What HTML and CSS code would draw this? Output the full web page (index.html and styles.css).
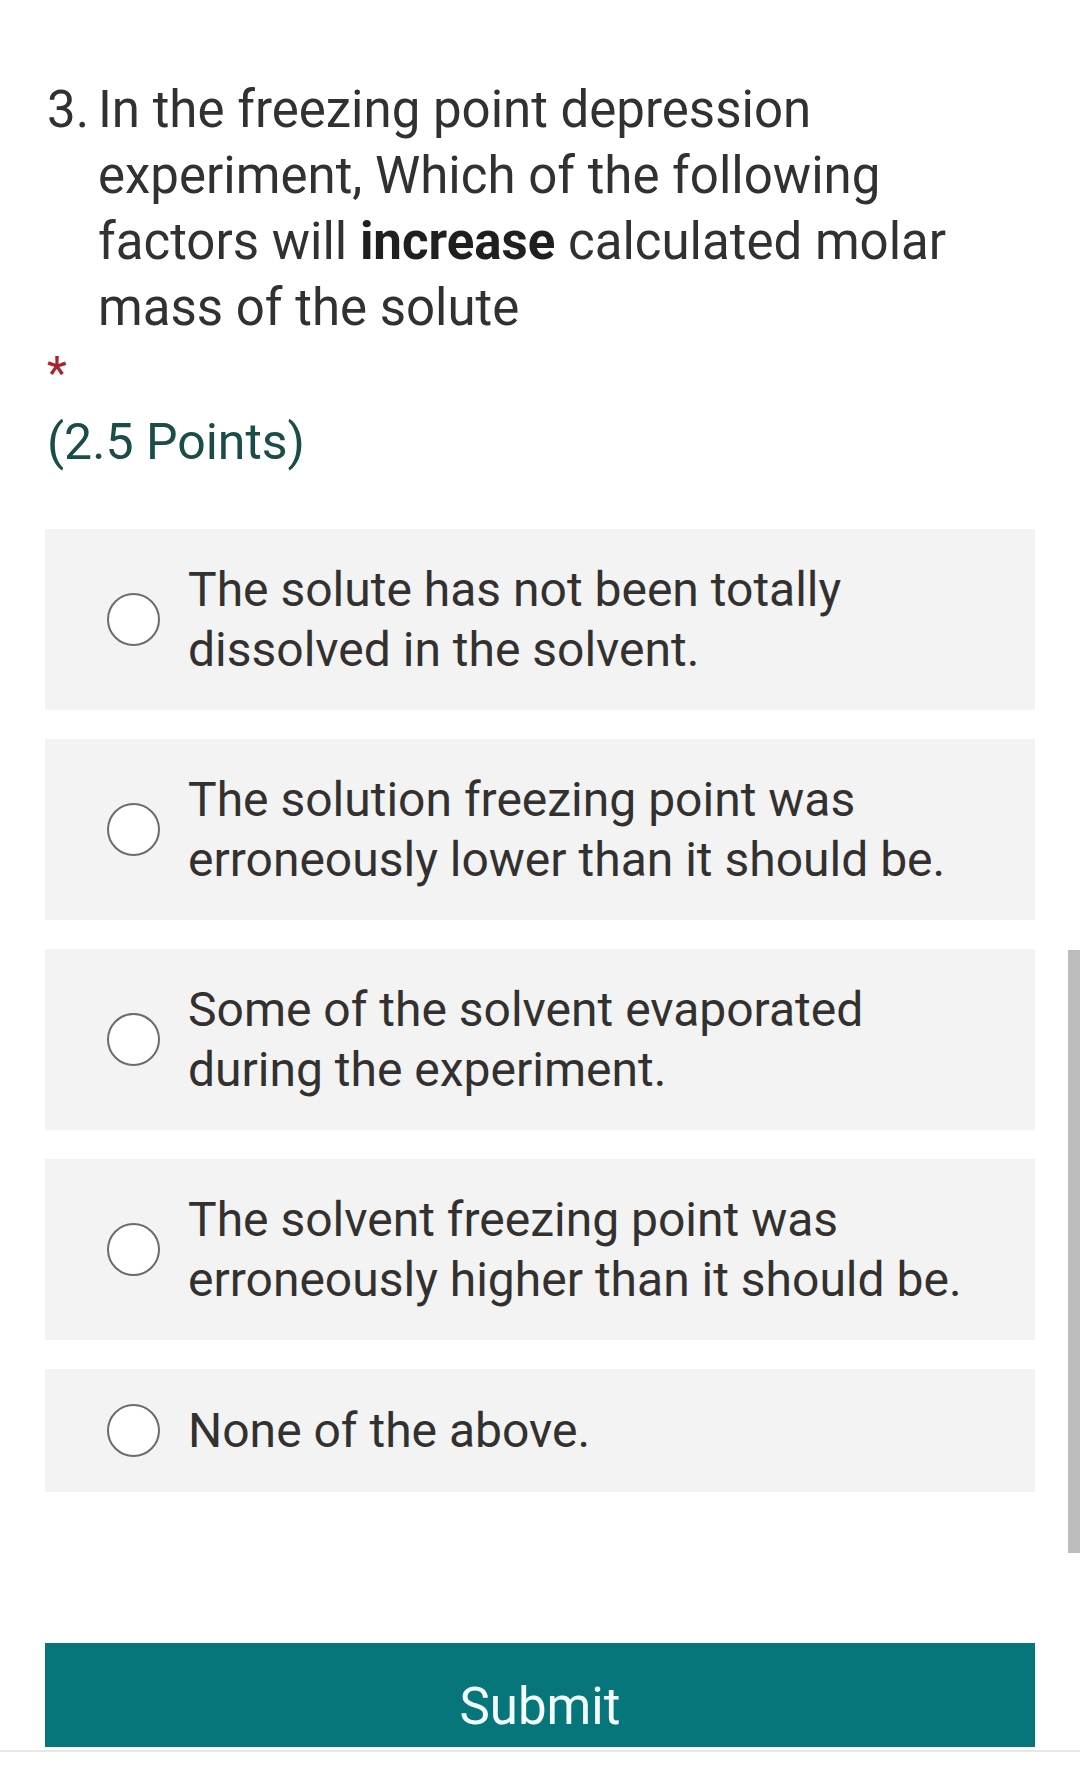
FILE: index.html
```html
<!DOCTYPE html>
<html lang="en">
<head>
<meta charset="utf-8">
<title>Question 3</title>
<link rel="stylesheet" href="styles.css">
</head>
<body>
<main class="page">
  <section class="question">
    <div class="q-title">
      <span class="q-num">3.</span>
      <span class="q-text">In the freezing point depression experiment, Which of the following factors will <b>increase</b> calculated molar mass of the solute</span>
    </div>
    <div class="required">*</div>
    <div class="points">(2.5 Points)</div>
  </section>

  <ul class="options">
    <li class="option"><span class="radio"></span><span class="opt-text">The solute has not been totally dissolved in the solvent.</span></li>
    <li class="option"><span class="radio"></span><span class="opt-text">The solution freezing point was erroneously lower than it should be.</span></li>
    <li class="option"><span class="radio"></span><span class="opt-text">Some of the solvent evaporated during the experiment.</span></li>
    <li class="option"><span class="radio"></span><span class="opt-text">The solvent freezing point was erroneously higher than it should be.</span></li>
    <li class="option"><span class="radio"></span><span class="opt-text">None of the above.</span></li>
  </ul>

  <button class="submit" type="button">Submit</button>
  <div class="bottom-bar"></div>
  <div class="scroll-thumb"></div>
</main>
</body>
</html>
```

FILE: styles.css
```css
html, body {
  margin: 0;
  padding: 0;
  background: #ffffff;
}

body {
  font-family: Roboto, "Noto Sans", "Liberation Sans", sans-serif;
  color: #323130;
}

.page {
  position: relative;
  width: 1080px;
  height: 1779px;
  overflow: hidden;
  box-sizing: border-box;
  padding: 77px 45px 0 45px;
}

.question {
  padding-left: 2px;
  padding-right: 45px;
}

.q-title {
  display: flex;
  font-size: 51px;
  line-height: 66px;
}

.q-num {
  flex: 0 0 51px;
}

.q-text b {
  font-weight: 700;
  color: #201f1e;
}

.required {
  color: #a4262c;
  font-size: 46px;
  line-height: 40px;
  height: 34px;
  margin-top: 12px;
}

.points {
  color: #1b4d48;
  font-size: 50px;
  line-height: 60px;
  margin-top: 25px;
}

.options {
  list-style: none;
  margin: 57px 0 0 0;
  padding: 0;
  display: flex;
  flex-direction: column;
  gap: 29px;
}

.option {
  display: flex;
  align-items: center;
  background: #f3f3f3;
  padding: 30.5px 40px 30.5px 62px;
  min-height: 62px;
}

.radio {
  flex: 0 0 auto;
  width: 49px;
  height: 49px;
  border: 2.5px solid #6b6b6b;
  border-radius: 50%;
  background: #ffffff;
  margin-right: 28px;
}

.opt-text {
  font-size: 48px;
  line-height: 60px;
}

.submit {
  display: block;
  width: 100%;
  height: 104px;
  margin-top: 151px;
  border: none;
  background: #07767a;
  color: #f4ffff;
  font-family: Roboto, "Noto Sans", "Liberation Sans", sans-serif;
  font-size: 51px;
  padding: 22px 0 0 0;
}

.bottom-bar {
  margin: 3px -45px 0 -45px;
  border-top: 2px solid #e8e8e8;
  height: 30px;
}

.scroll-thumb {
  position: absolute;
  right: 0;
  top: 950px;
  width: 12px;
  height: 603px;
  background: #bdbdbd;
}
```
